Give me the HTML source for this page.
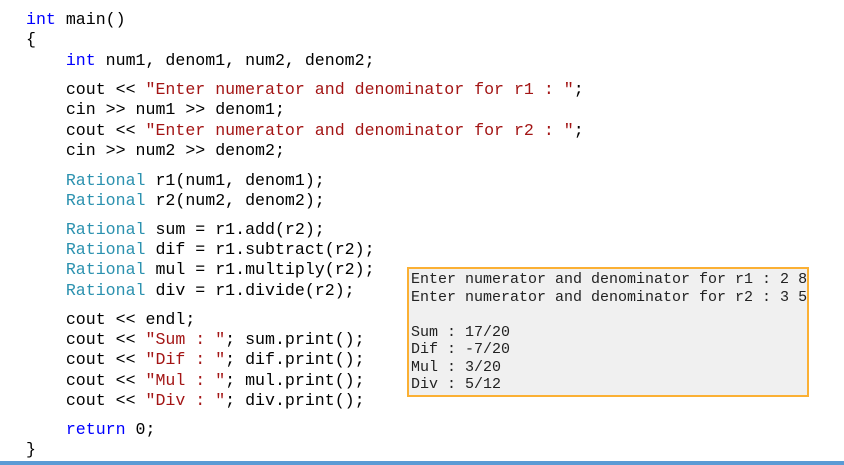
<!DOCTYPE html>
<html><head><meta charset="utf-8"><style>
body{margin:0;width:844px;height:465px;background:#fff;position:relative;overflow:hidden}
.l{position:absolute;left:26px;font:16.6px/20px "Liberation Mono",monospace;color:#000;white-space:pre}
.k{color:#0000ff}.t{color:#2b91af}.s{color:#a31515}
#con{position:absolute;left:407px;top:267px;width:398px;height:126px;border:2px solid #fbb034;background:#f0f0f0}
.c{position:absolute;left:2px;font:15px/18px "Liberation Mono",monospace;color:#222;white-space:pre}
#bar{position:absolute;left:0;top:461px;width:844px;height:4px;background:#5b9bd5}
</style></head><body>
<div class="l" style="top:10px"><span class="k">int</span> main()</div>
<div class="l" style="top:30px">{</div>
<div class="l" style="top:51px">    <span class="k">int</span> num1, denom1, num2, denom2;</div>
<div class="l" style="top:80px">    cout &lt;&lt; <span class="s">"Enter numerator and denominator for r1 : "</span>;</div>
<div class="l" style="top:100px">    cin &gt;&gt; num1 &gt;&gt; denom1;</div>
<div class="l" style="top:121px">    cout &lt;&lt; <span class="s">"Enter numerator and denominator for r2 : "</span>;</div>
<div class="l" style="top:141px">    cin &gt;&gt; num2 &gt;&gt; denom2;</div>
<div class="l" style="top:171px">    <span class="t">Rational</span> r1(num1, denom1);</div>
<div class="l" style="top:191px">    <span class="t">Rational</span> r2(num2, denom2);</div>
<div class="l" style="top:220px">    <span class="t">Rational</span> sum = r1.add(r2);</div>
<div class="l" style="top:240px">    <span class="t">Rational</span> dif = r1.subtract(r2);</div>
<div class="l" style="top:260px">    <span class="t">Rational</span> mul = r1.multiply(r2);</div>
<div class="l" style="top:281px">    <span class="t">Rational</span> div = r1.divide(r2);</div>
<div class="l" style="top:310px">    cout &lt;&lt; endl;</div>
<div class="l" style="top:330px">    cout &lt;&lt; <span class="s">"Sum : "</span>; sum.print();</div>
<div class="l" style="top:350px">    cout &lt;&lt; <span class="s">"Dif : "</span>; dif.print();</div>
<div class="l" style="top:371px">    cout &lt;&lt; <span class="s">"Mul : "</span>; mul.print();</div>
<div class="l" style="top:391px">    cout &lt;&lt; <span class="s">"Div : "</span>; div.print();</div>
<div class="l" style="top:420px">    <span class="k">return</span> 0;</div>
<div class="l" style="top:440px">}</div>
<div id="con">
<div class="c" style="top:2px">Enter numerator and denominator for r1 : 2 8</div>
<div class="c" style="top:20px">Enter numerator and denominator for r2 : 3 5</div>
<div class="c" style="top:55px">Sum : 17/20</div>
<div class="c" style="top:72px">Dif : -7/20</div>
<div class="c" style="top:90px">Mul : 3/20</div>
<div class="c" style="top:107px">Div : 5/12</div>
</div>
<div id="bar"></div>
</body></html>
